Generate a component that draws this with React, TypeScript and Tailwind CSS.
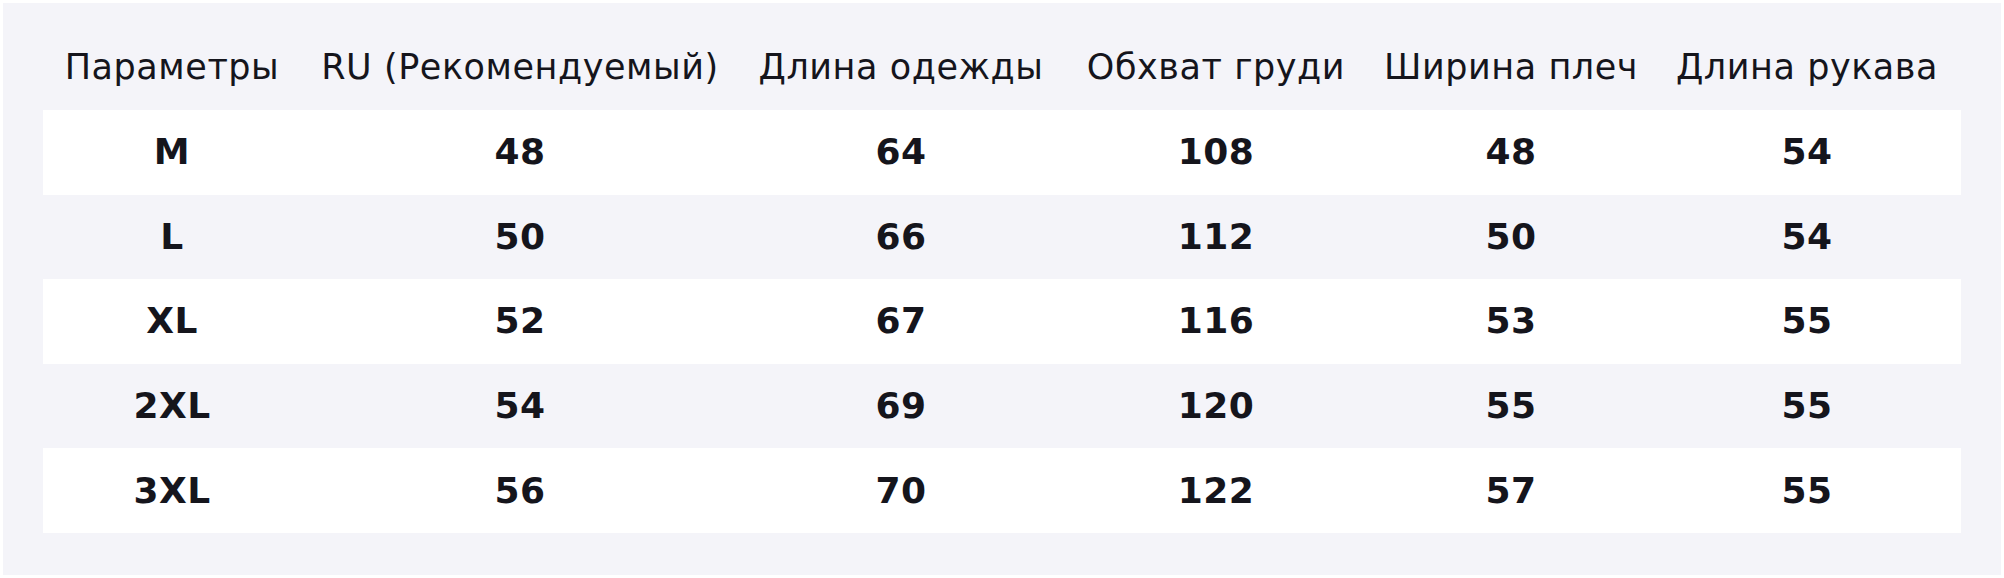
import React from "react";

const headers = [
  "Параметры",
  "RU (Рекомендуемый)",
  "Длина одежды",
  "Обхват груди",
  "Ширина плеч",
  "Длина рукава",
];

const rows = [
  ["M", "48", "64", "108", "48", "54"],
  ["L", "50", "66", "112", "50", "54"],
  ["XL", "52", "67", "116", "53", "55"],
  ["2XL", "54", "69", "120", "55", "55"],
  ["3XL", "56", "70", "122", "57", "55"],
];

export default function App() {
  return (
    <div className="w-[2004px] h-[578px] bg-white p-[3px]" style={{ fontFamily: '"DejaVu Sans", sans-serif' }}>
      <div className="w-[1998px] h-[572px] bg-[#f4f4f9] pt-[22px] px-[40px] pb-[42px]">
        <table className="w-[1918px] border-collapse table-fixed text-[#15151c]">
          <colgroup>
            <col className="w-[258px]" />
            <col className="w-[438px]" />
            <col className="w-[324px]" />
            <col className="w-[306px]" />
            <col className="w-[284px]" />
            <col className="w-[308px]" />
          </colgroup>
          <thead>
            <tr className="h-[85px]">
              {headers.map((h) => (
                <th key={h} className="p-0 text-center align-middle font-normal text-[35px] tracking-[0.55px] whitespace-nowrap">
                  {h}
                </th>
              ))}
            </tr>
          </thead>
          <tbody>
            {rows.map((r, i) => (
              <tr key={i} className={i % 2 === 0 ? "h-[84.6px] bg-white" : "h-[84.6px] bg-transparent"}>
                {r.map((c, j) => (
                  <td key={j} className="p-0 text-center align-middle font-bold text-[36px] tracking-[0.5px]">
                    {c}
                  </td>
                ))}
              </tr>
            ))}
          </tbody>
        </table>
      </div>
    </div>
  );
}
